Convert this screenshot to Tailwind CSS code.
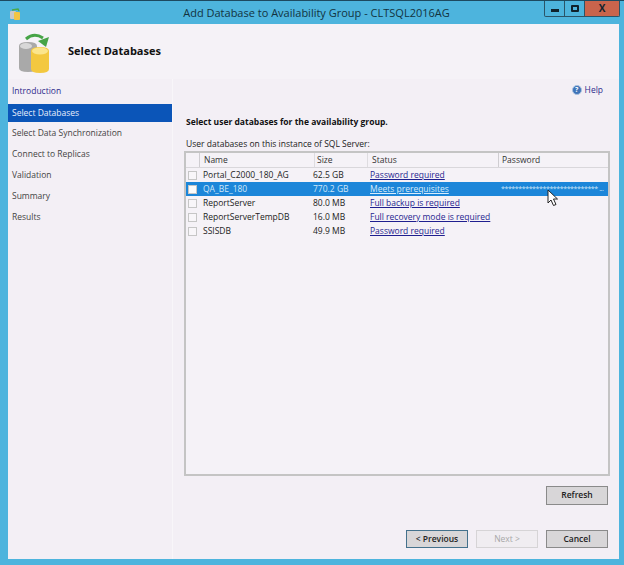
<!DOCTYPE html>
<html>
<head>
  <meta charset="UTF-8">
  <title>Add Database to Availability Group</title>
  <script src="https://cdn.jsdelivr.net/npm/@tailwindcss/browser@4"></script>
</head>
<body class="bg-white">
  <div class="w-[624px] h-[565px] flex flex-col overflow-hidden bg-[#4db4dd] font-['Open_Sans','Noto_Sans',sans-serif] text-[8.5px] text-[#222]">
    <!-- title bar -->
    <div class="h-[24px] shrink-0 flex items-start relative border-t border-[#1d4a60]">
      <svg class="absolute top-[7px] left-[10px] w-[11px] h-[12px]" viewBox="0 0 11 12">
        <rect x="0" y="3" width="6" height="8" rx="1" fill="#c9c9c9"/>
        <rect x="4" y="4" width="6" height="8" rx="1" fill="#f2c543"/>
        <path d="M2 2 L8 1 L9 3" stroke="#4aa84a" stroke-width="1.5" fill="none"/>
      </svg>
      <div class="flex-1 text-center text-[11px] leading-[24px] text-[#12333f] pl-[9px]">Add Database to Availability Group - CLTSQL2016AG</div>
      <div class="absolute top-0 right-[4px] flex h-[16px] border border-t-0 border-[#2a5468] rounded-b-[2px] overflow-hidden">
        <div class="w-[20px] flex items-center justify-center border-r border-[#2a5468]"><div class="w-[8px] h-[3px] mt-[3px] bg-[#10222c]"></div></div>
        <div class="w-[20px] flex items-center justify-center border-r border-[#2a5468]"><div class="w-[8px] h-[7px] border-2 border-[#10222c] rounded-[1px]"></div></div>
        <div class="w-[34px] flex items-center justify-center bg-[#c9644c] text-[#10222c] text-[10px] font-bold">X</div>
      </div>
    </div>

    <div class="flex-1 min-h-0 flex flex-col ml-[8px] mr-[5px] mb-[6px] bg-[#f3eff5]">
      <!-- header -->
      <div class="h-[55px] shrink-0 flex items-center bg-[#f5f2f7]">
        <svg class="ml-[9px] w-[36px] h-[42px] mt-[3px]" viewBox="0 0 36 42">
          <path d="M2 14 Q2 10 11 10 Q20 10 20 14 L20 36 Q20 40 11 40 Q2 40 2 36 Z" fill="#a9a9a9"/>
          <ellipse cx="9" cy="14" rx="6" ry="3" fill="#d8d8d8"/>
          <path d="M14 19 Q14 15 23 15 Q32 15 32 19 L32 37 Q32 41 23 41 Q14 41 14 37 Z" fill="#f3c83f"/>
          <ellipse cx="23" cy="19" rx="8" ry="3.5" fill="#fbe58c"/>
          <path d="M9 7 Q17 0 26 6" stroke="#47a447" stroke-width="3" fill="none"/>
          <path d="M21 9 L32 5 L29 15 Z" fill="#47a447"/>
        </svg>
        <div class="ml-[15px] text-[11px] font-bold text-[#111]">Select Databases</div>
      </div>

      <div class="flex-1 min-h-0 flex bg-[radial-gradient(#e2dceb_0.5px,transparent_0.6px)] bg-[length:2px_2px]">
        <!-- steps -->
        <div class="w-[165px] shrink-0 pt-[2px] border-r border-[#f8f6f9] text-[#444]">
          <div class="h-[21px] mb-[2px] pl-[4px] flex items-center text-[#2e2a8c]">Introduction</div>
          <div class="h-[18px] pl-[4px] flex items-center bg-[#0b55b8] text-[#e8eefc]">Select Databases</div>
          <div class="h-[21px] mt-[1px] pl-[4px] flex items-center">Select Data Synchronization</div>
          <div class="h-[21px] pl-[4px] flex items-center">Connect to Replicas</div>
          <div class="h-[21px] pl-[4px] flex items-center">Validation</div>
          <div class="h-[21px] pl-[4px] flex items-center">Summary</div>
          <div class="h-[21px] pl-[4px] flex items-center">Results</div>
        </div>

        <!-- page -->
        <div class="flex-1 min-w-0 relative flex flex-col pl-[11px] pr-[9px]">
          <div class="h-[20px] pt-[2px] flex items-center justify-end gap-[3px] pr-[7px] text-[#2e2a8c]">
            <div class="w-[10px] h-[10px] rounded-full bg-[#3f74b8] border border-[#a9c1e0] text-white text-[7px] leading-[8px] text-center font-bold">?</div>
            <span>Help</span>
          </div>
          <div class="mt-[16px] ml-[2px] h-[14px] flex items-center font-bold text-[#111]">Select user databases for the availability group.</div>
          <div class="mt-[8px] ml-[2px] h-[14px] flex items-center">User databases on this instance of SQL Server:</div>

          <!-- database list -->
          <div class="h-[325px] border-2 border-[#c4c4c4] bg-[#f5f2f7]">
            <div class="h-[15px] flex items-center border-b border-[#d9d7db] text-[#333]">
              <div class="w-[14px] h-full border-r border-[#cfcdd1]"></div>
              <div class="w-[114px] pl-[4px]">Name</div>
              <div class="w-[53px] pl-[2px] h-full flex items-center border-l border-[#dedce0]">Size</div>
              <div class="w-[131px] pl-[4px] h-full flex items-center border-l border-[#dedce0]">Status</div>
              <div class="flex-1 pl-[3px] h-full flex items-center border-l border-[#cfcdd1]">Password</div>
            </div>
            <div class="h-[14px] flex items-center">
              <div class="w-[14px] pl-[2px]"><div class="w-[9px] h-[9px] border border-[#c6c6c6] bg-[#f8f6f9]"></div></div>
              <div class="w-[113px] pl-[3px]">Portal_C2000_180_AG</div>
              <div class="w-[54px]">62.5 GB</div>
              <div class="w-[131px] pl-[3px] whitespace-nowrap"><a class="underline text-[#1f1f8f]">Password required</a></div>
            </div>
            <div class="h-[14px] flex items-center bg-[#1c86d9] text-[#cfe6f8]">
              <div class="w-[14px] pl-[2px]"><div class="w-[9px] h-[9px] border border-[#c6c6c6] bg-[#fbfbfb]"></div></div>
              <div class="w-[113px] pl-[3px]">QA_BE_180</div>
              <div class="w-[54px]">770.2 GB</div>
              <div class="w-[131px] pl-[3px] whitespace-nowrap"><a class="underline text-[#d8ecfb]">Meets prerequisites</a></div>
              <div class="flex-1 pl-[3px] text-[7px] tracking-[-0.4px] whitespace-nowrap overflow-hidden">**************************** ...</div>
            </div>
            <div class="h-[14px] flex items-center">
              <div class="w-[14px] pl-[2px]"><div class="w-[9px] h-[9px] border border-[#c6c6c6] bg-[#f8f6f9]"></div></div>
              <div class="w-[113px] pl-[3px]">ReportServer</div>
              <div class="w-[54px]">80.0 MB</div>
              <div class="w-[131px] pl-[3px] whitespace-nowrap"><a class="underline text-[#1f1f8f]">Full backup is required</a></div>
            </div>
            <div class="h-[14px] flex items-center">
              <div class="w-[14px] pl-[2px]"><div class="w-[9px] h-[9px] border border-[#c6c6c6] bg-[#f8f6f9]"></div></div>
              <div class="w-[113px] pl-[3px]">ReportServerTempDB</div>
              <div class="w-[54px]">16.0 MB</div>
              <div class="w-[131px] pl-[3px] whitespace-nowrap"><a class="underline text-[#1f1f8f]">Full recovery mode is required</a></div>
            </div>
            <div class="h-[14px] flex items-center">
              <div class="w-[14px] pl-[2px]"><div class="w-[9px] h-[9px] border border-[#c6c6c6] bg-[#f8f6f9]"></div></div>
              <div class="w-[113px] pl-[3px]">SSISDB</div>
              <div class="w-[54px]">49.9 MB</div>
              <div class="w-[131px] pl-[3px] whitespace-nowrap"><a class="underline text-[#1f1f8f]">Password required</a></div>
            </div>
          </div>

          <div class="mt-[10px] flex justify-end pr-[2px]">
            <div class="w-[62px] h-[19px] flex items-center justify-center border border-[#8a8a8a] bg-[#d8d6d8] font-semibold">Refresh</div>
          </div>
          <div class="mt-[25px] flex justify-end gap-[8px] pr-[2px]">
            <div class="w-[62px] h-[18px] flex items-center justify-center border border-[#44718c] bg-[#d8d6d8] font-semibold">&lt; Previous</div>
            <div class="w-[62px] h-[18px] flex items-center justify-center border border-[#d6d4d6] bg-[#f0edf1] text-[#a8a8a8]">Next &gt;</div>
            <div class="w-[62px] h-[18px] flex items-center justify-center border border-[#8a8a8a] bg-[#d8d6d8] font-semibold">Cancel</div>
          </div>

          <!-- mouse pointer over the list -->
          <svg class="absolute left-[374px] top-[110px] w-[12px] h-[18px]" viewBox="0 0 12 18">
            <path d="M1 1 L1 14 L4 11 L6.5 16.5 L9 15.5 L6.5 10 L10.5 10 Z" fill="#fff" stroke="#222" stroke-width="1"/>
          </svg>
        </div>
      </div>
    </div>
  </div>
</body>
</html>
